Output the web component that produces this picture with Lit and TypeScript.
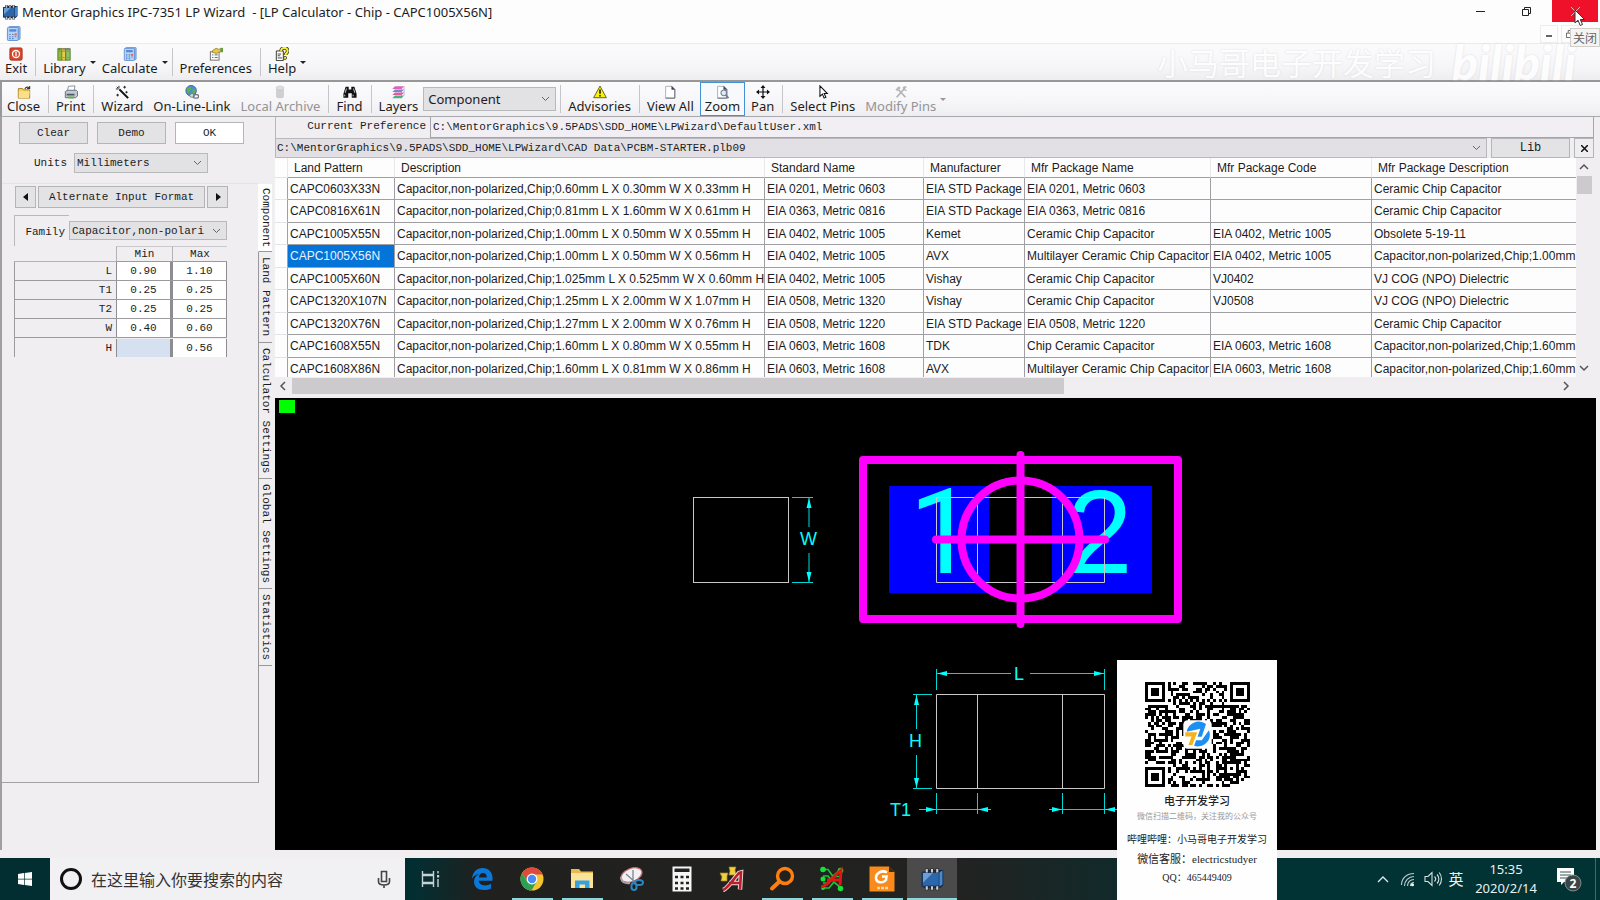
import { LitElement, html, css, svg, nothing } from "lit";
import { customElement } from "lit/decorators.js";
import { classMap } from "lit/directives/class-map.js";

type Tool = {
  label: string;
  icon: unknown;
  arrow?: boolean;
  disabled?: boolean;
  active?: boolean;
  sep?: boolean;
};

const icon = (body: unknown, size = 14) =>
  html`<svg class="ico" width=${size} height=${size} viewBox="0 0 16 16" aria-hidden="true">${body}</svg>`;

const calculatorGlyph = svg`
  <rect x="3" y="0.5" width="12" height="14" rx="1" fill="#8fb6ee" stroke="#6f97d4"/>
  <rect x="1.500" y="1.500" width="11.500" height="14" rx="1" fill="#b4d3f8" stroke="#5f8dd2"/>
  <rect x="3.500" y="3.500" width="7.500" height="2.500" fill="#5a86d0"/>
  <path d="M3.500 9h1.500M6.500 9h1.500M3.500 11.500h1.500M6.500 11.500h1.500M9.500 11.500h1.500M3.500 13.500h1.500M6.500 13.500h1.500" stroke="#4f7cc4" stroke-width="1.200"/>
  <rect x="9" y="8" width="2.500" height="2" fill="#e2643c"/>`;

const pageGlyph = svg`
  <path d="M3 1.500h7l3.500 3.500v10H3z" fill="#fff" stroke="#a3aab4"/>
  <path d="M10 1.500v3.500h3.500z" fill="#3d434c" stroke="#3d434c" stroke-width=".6"/>
  <path d="M13.500 5v10H3" fill="none" stroke="#5d6570"/>`;

const chipGlyph = svg`
  <path d="M2.500 3.500 4 2h11.500v10L13.500 14h-11z" fill="#12253c"/>
  <rect x="1.500" y="3.500" width="11.500" height="9.500" fill="#2c66ab" stroke="#17365f"/>
  <path d="M2 4h6.500L2 10.500z" fill="#7fb2e6" opacity=".75"/>
  <path d="M13 3.500 15 2.300v9.400L13 13z" fill="#4a88cc"/>
  <path d="M4.500 1v3M8 1v3M11.500 1v3M4.500 12.500v3M8 12.500v3M11.500 12.500v3" stroke="#20262e" stroke-width="2.400"/>
  <path d="M4.500 1.300v2.400M8 1.300v2.400M11.500 1.300v2.400M4.500 12.800v2.400M8 12.800v2.400M11.500 12.800v2.400" stroke="#c9ced6" stroke-width="1.400"/>`;

const mainTools: Tool[] = [
  {
    label: "Exit",
    sep: true,
    icon: icon(svg`<rect x="1" y="1" width="14" height="14" rx="1.500" fill="#d8472b" stroke="#a93019"/>
      <circle cx="8" cy="8" r="4" fill="none" stroke="#fff" stroke-width="1.500"/><path d="M8 5.500v5" stroke="#fff" stroke-width="1.500"/>`),
  },
  {
    label: "Library",
    arrow: true,
    icon: icon(svg`<rect x="1" y="2" width="4.500" height="13" fill="#8fbf3c" stroke="#4e7420"/><rect x="5.500" y="2" width="4.500" height="13" fill="#e6d04a" stroke="#8d7a1c"/>
      <rect x="10" y="2" width="5" height="13" fill="#8fbf6a" stroke="#4e7420"/><path d="M1 5h14M1 12h14" stroke="#8a88b0"/><path d="M3 1v3M8 1v3M12.500 1v3" stroke="#7c5ba8"/>`),
  },
  { label: "Calculate", arrow: true, sep: true, icon: icon(calculatorGlyph) },
  {
    label: "Preferences",
    sep: true,
    icon: icon(svg`<rect x="1.500" y="5.500" width="10" height="9.500" fill="#fbfbf6" stroke="#5c6268"/><path d="M3.500 9h1.500M6.500 9h3.500M3.500 12h1.500M6.500 12h3.500" stroke="#4e5a66"/>
      <path d="M4 4 8 1.500l3 1 4-.5v3l-4 1-2.500 1.500L4 6z" fill="#e8c64a" stroke="#8a7420" stroke-width=".8"/><rect x="13" y="1" width="3" height="5" fill="#6a9a3e"/>`),
  },
  {
    label: "Help",
    arrow: true,
    icon: icon(svg`<path d="M1.500 4.500h8v11h-8z" fill="#fff" stroke="#222"/><path d="M3 8h4M3 10h3M3 12.500h5" stroke="#333"/>
      <path d="M7 4.500C7 0 14.500 0 14.500 4.500 14.500 7 12 7 12 9" fill="none" stroke="#222" stroke-width="4"/><path d="M7 4.500C7 0 14.500 0 14.500 4.500 14.500 7 12 7 12 9" fill="none" stroke="#f6ee2c" stroke-width="2.400"/>
      <circle cx="11.500" cy="12.500" r="1.800" fill="#f6ee2c" stroke="#222" stroke-width=".8"/>`),
  },
];

const viewToolsLeft: Tool[] = [
  {
    label: "Close",
    sep: true,
    icon: icon(svg`<path d="M1.500 4h5l1 1.500h7V15h-13z" fill="#f3cf62" stroke="#a57a1e"/><path d="M2 7h12.500l-1 8H2z" fill="#fbe08a"/><path d="M9 4.500c1-2 3-2.500 5-1.500M14.500 1v3h-3" fill="none" stroke="#333" stroke-width="1.200"/>`),
  },
  {
    label: "Print",
    sep: true,
    icon: icon(svg`<path d="M5 1.500 12.500 1 11.500 7H4z" fill="#fff" stroke="#7c8794"/><path d="M1.500 7.500 4 6h10l1.500 1.500v5L13 14.500H1.500z" fill="#c3c8d2" stroke="#5c6674"/><path d="M3 10h9v2H3z" fill="#4e5866"/><path d="M4 13h8l-1 2.500H5z" fill="#66b04e"/>`),
  },
  {
    label: "Wizard",
    icon: icon(svg`<path d="M5 5 15 15" stroke="#111" stroke-width="2.400"/><path d="M4.500 1v3M1 4.500h3M2 2l1.500 1.500M11 1v3M9.500 2.500h3M3 10v3M1.500 11.500h3M13 7v2.500M12 8.300h2.500" stroke="#222" stroke-width="1.100"/>`),
  },
  {
    label: "On-Line-Link",
    icon: icon(svg`<circle cx="7" cy="6.500" r="6" fill="#4c8fd0" stroke="#2f5f9a"/><path d="M3 3c2-1.500 4-1 4 1S5 6 5 8 3 9 2 7s0-3 1-4zM9 5c2-1 3.500 0 3.500 2S10 10 9 9 8 6 9 5z" fill="#5db04c"/>
      <rect x="5.500" y="10" width="5.500" height="4" rx="2" fill="#d9dde4" stroke="#6c7683"/><rect x="9.500" y="11" width="6" height="4" rx="2" fill="none" stroke="#6c7683" stroke-width="1.400"/>`),
  },
  {
    label: "Local Archive",
    disabled: true,
    sep: true,
    icon: icon(svg`<path d="M3.500 3.500v9.500c0 3 9 3 9 0V3.500z" fill="#cfcfcf"/><ellipse cx="8" cy="3.300" rx="4.500" ry="2.200" fill="#dedede" stroke="#c3c3c3" stroke-width=".6"/>`),
  },
  {
    label: "Find",
    sep: true,
    icon: icon(svg`<path d="M3 2h3.500v3H9.500V2H13l2.500 8v4.500H10v-5H6v5H.5V10z" fill="#111"/><path d="M4 4 2.500 9M12 4l1.500 5M2 11v2M11.500 11v2" stroke="#f2f2f2" stroke-width=".9"/>`),
  },
  {
    label: "Layers",
    icon: icon(svg`<path d="M4.500 1.500H15l-3 3H1.500z" fill="#d766b4"/><path d="M4.500 5H15l-3 3H1.500z" fill="#7d82d8"/><path d="M4.500 8.500H15l-3 3H1.500z" fill="#e05ca0"/><path d="M4.500 12H15l-3 3H1.500z" fill="#4fae86"/>
      <path d="M15 1.500v10.500M12 4.500v10.500" stroke="#8a86b0" stroke-width=".6"/>`),
  },
];

const viewToolsRight: Tool[] = [
  {
    label: "Advisories",
    sep: true,
    icon: icon(svg`<path d="M8 1.200 15.300 14.500H.7z" fill="#f8f010" stroke="#55520a" stroke-linejoin="round"/><path d="M8 5v5M8 11.500v1.500" stroke="#111" stroke-width="1.700"/>`),
  },
  { label: "View All", icon: icon(pageGlyph) },
  {
    label: "Zoom",
    active: true,
    icon: icon(svg`${pageGlyph}<circle cx="10" cy="9" r="3.200" fill="#dcecf8" stroke="#6f7f92" stroke-width="1.200"/><path d="m12.300 11.300 3 3.700" stroke="#6f7f92" stroke-width="2"/>`),
  },
  {
    label: "Pan",
    sep: true,
    icon: icon(svg`<path d="M8 2v12M2 8h12" stroke="#111" stroke-width="1.400"/><path d="m8 0 2.800 3.500H5.200zM8 16l2.800-3.500H5.200zM0 8l3.500-2.800v5.600zM16 8l-3.500-2.800v5.600z" fill="#111"/>`),
  },
  {
    label: "Select Pins",
    icon: icon(svg`<path d="M4.500 1v12l2.800-2.600L9.300 15l2-.9-2-4.300H13z" fill="#fff" stroke="#111" stroke-width="1.200"/>`),
  },
  {
    label: "Modify Pins",
    disabled: true,
    arrow: true,
    icon: icon(svg`<path d="m3 14 9-10M4 4l9 10" stroke="#b4b4b4" stroke-width="2"/><path d="M1.500 5.500 5 1.500l3 1.500-4 4z" fill="#bdbdbd"/><path d="M10 2.500c2-2 4-1 5 0l-2 .5v2l2 1c-2 1.500-5 0-5-3.500z" fill="#b4b4b4"/>`),
  },
];

const columns = ["Land Pattern", "Description", "Standard Name", "Manufacturer", "Mfr Package Name", "Mfr Package Code", "Mfr Package Description"];

const chip = "Capacitor,non-polarized,Chip;";
const rows: string[][] = [
  ["CAPC0603X33N", chip + "0.60mm L X 0.30mm W X 0.33mm H", "EIA 0201, Metric 0603", "EIA STD Package", "EIA 0201, Metric 0603", "", "Ceramic Chip Capacitor"],
  ["CAPC0816X61N", chip + "0.81mm L X 1.60mm W X 0.61mm H", "EIA 0363, Metric 0816", "EIA STD Package", "EIA 0363, Metric 0816", "", "Ceramic Chip Capacitor"],
  ["CAPC1005X55N", chip + "1.00mm L X 0.50mm W X 0.55mm H", "EIA 0402, Metric 1005", "Kemet", "Ceramic Chip Capacitor", "EIA 0402, Metric 1005", "Obsolete 5-19-11"],
  ["CAPC1005X56N", chip + "1.00mm L X 0.50mm W X 0.56mm H", "EIA 0402, Metric 1005", "AVX", "Multilayer Ceramic Chip Capacitor", "EIA 0402, Metric 1005", chip + "1.00mm"],
  ["CAPC1005X60N", chip + "1.025mm L X 0.525mm W X 0.60mm H", "EIA 0402, Metric 1005", "Vishay", "Ceramic Chip Capacitor", "VJ0402", "VJ COG (NPO) Dielectric"],
  ["CAPC1320X107N", chip + "1.25mm L X 2.00mm W X 1.07mm H", "EIA 0508, Metric 1320", "Vishay", "Ceramic Chip Capacitor", "VJ0508", "VJ COG (NPO) Dielectric"],
  ["CAPC1320X76N", chip + "1.27mm L X 2.00mm W X 0.76mm H", "EIA 0508, Metric 1220", "EIA STD Package", "EIA 0508, Metric 1220", "", "Ceramic Chip Capacitor"],
  ["CAPC1608X55N", chip + "1.60mm L X 0.80mm W X 0.55mm H", "EIA 0603, Metric 1608", "TDK", "Chip Ceramic Capacitor", "EIA 0603, Metric 1608", chip + "1.60mm"],
  ["CAPC1608X86N", chip + "1.60mm L X 0.81mm W X 0.86mm H", "EIA 0603, Metric 1608", "AVX", "Multilayer Ceramic Chip Capacitor", "EIA 0603, Metric 1608", chip + "1.60mm"],
];

const dimensions = [
  { name: "L", min: "0.90", max: "1.10" },
  { name: "T1", min: "0.25", max: "0.25" },
  { name: "T2", min: "0.25", max: "0.25" },
  { name: "W", min: "0.40", max: "0.60" },
  { name: "H", min: "", max: "0.56" },
];

const sideTabs = ["Component", "Land Pattern", "Calculator Settings", "Global Settings", "Statistics"];

/** Builds the dark modules of a 37 x 37 code as one path. */
function codePath(): string {
  const n = 37;
  let seed = 465449;
  const next = () => {
    seed = (seed * 1103515245 + 12345) % 2147483648;
    return seed / 2147483648;
  };
  const ring = (x: number, y: number, cx: number, cy: number) => Math.max(Math.abs(x - cx), Math.abs(y - cy));
  let d = "";
  for (let y = 0; y < n; y++) {
    for (let x = 0; x < n; x++) {
      let dark = next() > 0.5;
      if (x === 6 || y === 6) dark = (x + y) % 2 === 0;
      for (const [cx, cy] of [[3, 3], [n - 4, 3], [3, n - 4]]) {
        const r = ring(x, y, cx, cy);
        if (r <= 4) dark = r <= 1 || r === 3;
      }
      const a = ring(x, y, 30, 30);
      if (a <= 2) dark = a !== 1;
      if (ring(x, y, 18, 18) <= 4) dark = false;
      if (dark) d += `M${x} ${y}h1v1h-1z`;
    }
  }
  return d;
}

const arrowHead = (x: number, y: number, dir: "l" | "r" | "u" | "d") => {
  const turn = { r: 0, d: 90, l: 180, u: 270 }[dir];
  return svg`<path d="M0 0-10-2.500v5z" transform="translate(${x} ${y}) rotate(${turn})" fill="#00ffff"/>`;
};

type App = { label: string; glyph: unknown; running?: boolean; active?: boolean };
const glyph = (body: unknown) => html`<svg width="26" height="26" viewBox="0 0 26 26" aria-hidden="true">${body}</svg>`;

const apps: App[] = [
  { label: "Edge", glyph: glyph(svg`<path d="M3 12.500C4 5.500 8 2 13.500 2 20 2 23.500 6.500 23.500 12v2.800H9.800c.2 3 3 4.600 6.200 4.600 2.300 0 4.300-.6 6-1.600v4.700C20 23.600 17.500 24 15 24 8.500 24 5 20.500 5 15.500c0-3.500 2-6 5-7.400-3 .4-5.500 2-7 4.400zM9.900 11.400h7.900C17.800 8.600 16.500 7 14 7c-2.400 0-3.700 1.800-4.100 4.400z" fill="#0b78d8"/>`) },
  { label: "Chrome", running: true, glyph: glyph(svg`<circle cx="13" cy="13" r="11.500" fill="#f4c430"/><path d="m3 7.200 8 13.600 1.500 3.700A11.500 11.500 0 0 1 3 7.200z" fill="#2aa055"/><path d="M3 7.200 8.500 16l4 8.500L17 16.500 13 13z" fill="#2aa055"/><path d="M3 7.200A11.500 11.500 0 0 1 23.600 8.500H13L8.500 14z" fill="#dd4b3e"/><circle cx="13" cy="13" r="5.400" fill="#fff"/><circle cx="13" cy="13" r="4.200" fill="#4a8af4"/>`) },
  { label: "File Explorer", running: true, glyph: glyph(svg`<path d="M2 3h8l2 2.500h12V22H2z" fill="#e9b94e"/><path d="M2 7h22v15H2z" fill="#fbe39a"/><path d="M6 22v-7.500h14.500V22H16v-3.500h-5.500V22z" fill="#35a2df"/>`) },
  { label: "Snipping Tool", glyph: glyph(svg`<ellipse cx="12.500" cy="9" rx="11" ry="6.500" transform="rotate(-22 12.500 9)" fill="#f2f0f2" stroke="#c66b73" stroke-width="1.200"/><path d="M2 11c0 5 4 7 9 6" stroke="#a7a3a8" stroke-width="2" fill="none"/><path d="m7 8 9 8M14 4v12" stroke="#7d858c" stroke-width="1.300"/><ellipse cx="20" cy="16.500" rx="4" ry="2.600" fill="none" stroke="#2b87bf" stroke-width="2"/><ellipse cx="15" cy="20.500" rx="2.600" ry="3.600" fill="none" stroke="#2b87bf" stroke-width="2"/>`) },
  { label: "Calculator", glyph: glyph(svg`<path d="M3.500.5h19v25h-19z" fill="#f6f6f6"/><path d="M5.500 2.500h15V6h-15z" fill="#222"/><path d="M6 11h3M11.500 11h3M17 11h3M6 17h3M11.500 17h3M17 17h3M6 22.500h3M11.500 22.500h3M17 22.500h3" stroke="#222" stroke-width="2.600"/>`) },
  { label: "Pads Layout", glyph: glyph(svg`<path d="M10 1h7l-1 3 1 5h-7l1-4zM1 7h8l-1 3v5H2l1-4z" fill="#f0cf45" stroke="#a28316" stroke-width=".7"/><path d="M4 24c4-1 9-9 16-17l2-.5-1 17M10 17h12" fill="none" stroke="#f2d7d7" stroke-width="4.500"/><path d="M4 24c4-1 9-9 16-17l2-.5-1 17M10 17h12" fill="none" stroke="#b81e2c" stroke-width="2.600"/>`) },
  { label: "Everything", running: true, glyph: glyph(svg`<circle cx="16" cy="10" r="7.500" fill="none" stroke="#ff7f0e" stroke-width="3.400"/><path d="m10.500 15.500-7.500 7" stroke="#ff7f0e" stroke-width="4" stroke-linecap="round"/>`) },
  { label: "Pads Router", running: true, glyph: glyph(svg`<path d="M4 3.500h5l5 7h8M4 10h5l4 5M4 17h6l4-7 7-6M4 22h6l5-6 7 6" fill="none" stroke="#12c832" stroke-width="1.700"/><g fill="#17e03a"><circle cx="4" cy="3.500" r="2.800"/><circle cx="4" cy="13" r="2.500"/><circle cx="21.500" cy="4.500" r="2.800"/><circle cx="21.500" cy="22.500" r="2.800"/><circle cx="4" cy="22" r="2"/></g><path d="M2 21c5 0 10-8 20-17l-1 15M8 14h14" fill="none" stroke="#e01616" stroke-width="3"/>`) },
  { label: "PDF", running: true, glyph: glyph(svg`<path d="M.5.500H20l5.500 5.500v19.500H.5z" fill="#f98a1c"/><path d="M20 .5v5.500h5.500z" fill="#3a2a18"/><path d="M18 6.500C13 3.500 6.500 7 7 12.500c.5 4.500 7 5 10 1.500l.5-3.500H13" fill="none" stroke="#fff" stroke-width="2.600"/><path d="M8 22h11" stroke="#fbd3a4" stroke-width="2.500" stroke-dasharray="3 1"/>`) },
  { label: "LP Wizard", running: true, active: true, glyph: html`<svg width="24" height="24" viewBox="0 0 16 16" aria-hidden="true">${chipGlyph}</svg>` },
];

@customElement("app-root")
export class AppRoot extends LitElement {
  static styles = css`
    :host {
      display: flex;
      flex-direction: column;
      height: 100vh;
      min-height: 700px;
      position: relative;
      overflow: hidden;
      background: #f0eef1;
      color: #1c1c1c;
      font: 13px/16px "Noto Sans", "Noto Sans CJK SC", sans-serif;
    }
    *, *::before, *::after { box-sizing: border-box; }
    button, input, select { font: inherit; color: inherit; margin: 0; padding: 0; border-radius: 0; }
    button { background: none; border: 0; white-space: nowrap; }
    select { appearance: none; }
    svg { display: block; flex: none; }

    .titlebar { display: flex; align-items: center; height: 24px; padding-left: 2px; background: #fdfdfe; flex: none; }
    .titlebar h1 { font: inherit; margin: 0 auto 0 4px; white-space: pre; }
    .win { width: 46px; height: 22px; align-self: flex-start; display: grid; place-items: center; }
    .win.close { background: #ef1029; margin: 0 2px 0 3px; }
    .menustrip { display: flex; align-items: center; justify-content: space-between; height: 20px; background: #fdfdfe; border-bottom: 1px solid #ebebed; padding-left: 6px; flex: none; }
    .mdi { display: flex; gap: 3px; padding-right: 21px; }
    .mdi button { width: 18px; height: 18px; border: 1px solid #ededf0; display: grid; place-items: center; }

    .toolbar { display: flex; align-items: center; flex: none; background: linear-gradient(#fcfbfc, #f6f5f8 60%, #eeeeef); }
    .toolbar.main { height: 38px; border-bottom: 2px solid #979797; }
    .toolbar.view { height: 35px; border-bottom: 1px solid #a9a8ac; border-left: 2px solid #98979a; }
    .tool { display: flex; flex-direction: column; align-items: center; height: 34px; padding: 2px 5px 0; border: 0; line-height: 14px; }
    .toolbar.view .tool { padding-top: 3px; }
    .tool.active { outline: 1px solid #4291d6; outline-offset: -1px; background: #f7f9fc; margin: 0 1px; }
    .tool.disabled { color: #949396; }
    .caret { width: 0; margin: 0 1px 0 -1px; border: 3px solid transparent; border-top-color: #222; border-bottom: 0; }
    .caret.disabled { border-top-color: #999; }
    .sep { width: 1px; height: 28px; background: #c6c5c9; margin: 0 2px 0 3px; }
    .layer { width: 133px; height: 24px; padding-left: 4px; margin: 0 1px 0 0; }
    .combo {
      border: 1px solid #b9b8bc;
      background: #e2e1e4 url("data:image/svg+xml,%3Csvg xmlns='http://www.w3.org/2000/svg' width='9' height='6'%3E%3Cpath d='M1 1l3.500 3.500L8 1' fill='none' stroke='%23666'/%3E%3C/svg%3E") no-repeat right 5px center;
    }

    .mono { font: 11px/14px "Liberation Mono", monospace; }
    .work { display: flex; flex: 1; min-height: 0; border-left: 2px solid #a19fa3; padding-right: 4px; margin-bottom: 8px; }
    .left { width: 256px; flex: none; display: flex; flex-direction: column; margin-bottom: 67px; border-bottom: 1px solid #a2a1a5; }
    .actions { display: grid; grid-template-columns: repeat(3, 69px); gap: 9px; padding: 5px 0 0 17px; }
    .btn { height: 22px; border: 1px solid #b5b4b8; background: #e3e2e5; }
    .btn.primary { background: #fff; }
    .units { display: flex; align-items: center; gap: 7px; padding: 9px 0 10px 32px; border-bottom: 1px solid #e4e3e6; }
    .units select { width: 134px; height: 20px; padding-left: 2px; }
    .pager { display: grid; grid-template-columns: 21px 1fr 21px; gap: 2px; width: 213px; margin: 2px 0 0 13px; }
    .pager .btn { display: grid; place-items: center; }
    .family { display: flex; align-items: center; width: 213px; margin: 7px 0 0 12px; }
    .family label { width: 55px; height: 31px; padding: 9px 4px 0 0; text-align: right; border: 1px solid #b9b8bc; border-width: 1px 0 0 1px; }
    .family select { flex: 1; min-width: 0; height: 19px; padding-left: 2px; }
    .dims { width: 213px; margin-left: 12px; border-collapse: separate; border-spacing: 0; table-layout: fixed; }
    .dims th, .dims td { padding: 0; height: 19px; font-weight: normal; border-bottom: 1px solid #9b9a9e; }
    .dims thead th { height: 16px; border-left: 1px solid #b3b2b6; border-top: 1px solid #c9c8cc; }
    .dims thead td { height: 16px; border-bottom: 1px solid #b3b2b6; }
    .dims tbody th { text-align: right; padding-right: 4px; border-left: 1px solid #9b9a9e; }
    .dims td input { display: block; width: 100%; height: 18px; border: 1px solid #8d8c90; border-width: 0 2px 0 1px; background: #fff; text-align: center; }
    .dims tr td:last-child input { border-right-width: 1px; }
    .dims td input.blank { background: #d5e1f1; }
    .dims tbody tr:last-child > * { border-bottom: 0; }

    .tabs { width: 17px; flex: none; padding-top: 67px; display: flex; flex-direction: column; margin-bottom: 67px; align-items: flex-start; }
    .tabs::after { content: ""; flex: 1; width: 1px; background: #98979b; }
    .tab { writing-mode: vertical-rl; width: 14px; padding: 5px 0; text-align: left; border-left: 1px solid #98979b; border-bottom: 1px solid #98979b; line-height: 12px; }
    .tab.on { background: #fff; border-left-color: #fff; padding: 4px 0; }

    .right { flex: 1; min-width: 0; display: flex; flex-direction: column; }
    .pref { display: flex; height: 21px; margin-right: 2px; flex: none; }
    .pref label { width: 155px; padding: 2px 4px 0 0; text-align: right; border-left: 1px solid #b9b8bc; }
    .pref input { flex: 1; min-width: 0; padding-left: 2px; border: 1px solid #a5a4a8; border-top: 0; background: #f1eff4; outline: 0; }
    .lib { display: flex; height: 20px; gap: 4px; margin-right: 2px; flex: none; }
    .lib .combo { flex: 1; min-width: 0; background-color: #e2e0e4; padding-left: 1px; }
    .lib .btn { height: 20px; width: 79px; font-size: 12px; }
    .lib .btn.x { width: 20px; display: grid; place-items: center; background: #eeedf0; }

    .list { display: flex; height: 219px; flex: none; background: #fefdfe; }
    .listview { flex: 1; min-width: 0; overflow: hidden; }
    .grid { width: 100%; table-layout: fixed; border-collapse: separate; border-spacing: 0; font: 12px/16px "Liberation Sans", Arial, sans-serif; }
    .grid th, .grid td { padding: 0 0 0 2px; text-align: left; font-weight: normal; white-space: nowrap; overflow: hidden; border-right: 1px solid #a09fa3; border-bottom: 1px solid #a09fa3; }
    .grid thead th, .grid thead td { height: 20px; padding-left: 6px; border-right-color: #e8e7ea; }
    .grid tbody td { height: 22px; }
    .grid tbody tr:nth-child(even) td { height: 23px; }
    .grid .gut { border-bottom-color: #e3e2e5; padding: 0; }
    .grid .sel { background: #0474d8; color: #e8f2fc; }
    .grid tr > :last-child { border-right: 0; }
    .vbar { width: 20px; flex: none; display: flex; flex-direction: column; align-items: center; padding: 4px 4px 4px 0; background: #f0eef1; }
    .vbar .thumb { width: 15px; height: 18px; margin: 4px 0 auto; background: #cccacd; }
    .hbar { display: flex; align-items: center; height: 17px; flex: none; padding: 0 25px 0 3px; gap: 4px; }
    .hbar .track { flex: 1; height: 16px; }
    .hbar .thumb { width: 61%; height: 100%; background: #cccacd; }
    .stage { flex: 1; min-height: 0; background: #000; margin-top: 4px; overflow: hidden; }
    .stage svg { width: 100%; height: 100%; }
    .stage text { font-family: "Liberation Sans", Arial, sans-serif; fill: #00ffff; }
    .stage .one { font-family: Roboto, sans-serif; }

    .taskbar { display: flex; height: 42px; flex: none; color: #e9f0f0; background: linear-gradient(90deg, #032e31 0, #032e31 26%, #20201f 30%, #222221 60%, #013234 80%); }
    .start { width: 50px; display: grid; place-items: center; }
    .search { width: 355px; display: flex; align-items: center; gap: 8px; padding: 0 14px 0 9px; background: #f1f0f2; }
    .search input { flex: 1; min-width: 0; border: 0; background: none; outline: 0; color: #333; font: 16px/24px "Noto Sans CJK SC", sans-serif; }
    .search input::placeholder { color: #333; opacity: 1; }
    .app { width: 50px; display: grid; place-items: center; position: relative; }
    .app.view { width: 52px; }
    .app.run::after { content: ""; position: absolute; left: 5px; right: 4px; bottom: 0; height: 2px; background: #8fd6dc; }
    .app.now { background: #4b4b4b; }
    .app.now::after { left: 0; right: 0; }
    .tray { margin-left: auto; display: flex; align-items: center; padding-right: 4px; }
    .tray button { display: grid; place-items: center; }
    .net { width: 25px; }
    .ime { font: 15px/20px "Noto Sans CJK SC", sans-serif; width: 22px; }
    .clock { text-align: center; line-height: 19px; width: 78px; }
    .note { width: 48px; }
    .desk { width: 1px; height: 42px; background: #44696b; margin-left: 2px; }

    .card { position: absolute; right: 323px; bottom: 0; width: 160px; height: 240px; background: #fefefe; display: flex; flex-direction: column; align-items: center; padding-top: 22px; font: 10px/20px "Noto Sans CJK SC", sans-serif; color: #222; white-space: nowrap; z-index: 2; }
    .card p { margin: 0; }
    .card .name { margin-top: 3px; font-size: 11px; font-weight: 500; }
    .card .hint { font-size: 8px; line-height: 12px; color: #999; margin-bottom: 7px; }
    .card .id { font: 10px/18px "Liberation Serif", "Noto Sans CJK SC", serif; }
    .card .latin { font: 11px/20px "Liberation Serif", "Noto Sans CJK SC", serif; }
    .mark { position: absolute; top: 32px; right: 24px; display: flex; align-items: center; gap: 16px; font: 31px/60px "Noto Sans CJK SC", sans-serif; color: #fff; opacity: .8; text-shadow: 0 0 2px #d4d3d8; pointer-events: none; }
    .mark .logo { font: italic 900 48px/60px Lato, sans-serif; }
    .tip { position: absolute; top: 28px; right: 0; width: 30px; height: 19px; background: #f5f4f2; border: 1px solid #cfcec9; font: 12px/17px "Noto Sans CJK SC", sans-serif; color: #666; text-align: center; white-space: nowrap; z-index: 2; }
    .cursor { position: absolute; top: 9px; right: 12px; z-index: 3; }
  `;

  private tool(t: Tool) {
    const state = { disabled: !!t.disabled, active: !!t.active };
    return html`<button class=${classMap({ tool: true, ...state })} type="button" ?disabled=${t.disabled}>${t.icon}<span>${t.label}</span></button>
      ${t.arrow ? html`<span class=${classMap({ caret: true, disabled: !!t.disabled })}></span>` : nothing}
      ${t.sep ? html`<span class="sep"></span>` : nothing}`;
  }

  private chevron(d: string) {
    return html`<svg width="10" height="10" viewBox="0 0 10 10" aria-hidden="true"><path d=${d} fill="none" stroke="#555" stroke-width="1.500" /></svg>`;
  }

  private leftPanel() {
    return html`<form class="left mono" @submit=${(e: Event) => e.preventDefault()}>
      <div class="actions">
        <button class="btn" type="button">Clear</button>
        <button class="btn" type="button">Demo</button>
        <button class="btn primary" type="submit">OK</button>
      </div>
      <div class="units">
        <label for="units">Units</label>
        <select id="units" class="combo"><option>Millimeters</option></select>
      </div>
      <div class="pager">
        <button class="btn" type="button" aria-label="Previous format"><svg width="6" height="8" viewBox="0 0 6 8"><path d="M5 0v8L0 4z" fill="#111" /></svg></button>
        <button class="btn" type="button">Alternate Input Format</button>
        <button class="btn" type="button" aria-label="Next format"><svg width="6" height="8" viewBox="0 0 6 8"><path d="M1 0v8l5-4z" fill="#111" /></svg></button>
      </div>
      <div class="family">
        <label for="family">Family</label>
        <select id="family" class="combo"><option>Capacitor,non-polari</option></select>
      </div>
      <table class="dims">
        <colgroup><col /><col width="56" /><col width="55" /></colgroup>
        <thead><tr><td></td><th scope="col">Min</th><th scope="col">Max</th></tr></thead>
        <tbody>
          ${dimensions.map(
            (d) => html`<tr>
              <th scope="row">${d.name}</th>
              <td><input class=${d.min ? "" : "blank"} aria-label="${d.name} min" .value=${d.min} /></td>
              <td><input aria-label="${d.name} max" .value=${d.max} /></td>
            </tr>`
          )}
        </tbody>
      </table>
    </form>`;
  }

  private grid() {
    return html`<div class="list">
        <div class="listview">
          <table class="grid">
            <colgroup><col width="13" /><col width="107" /><col width="370" /><col width="159" /><col width="101" /><col width="186" /><col width="161" /><col /></colgroup>
            <thead><tr><td class="gut"></td>${columns.map((c) => html`<th scope="col">${c}</th>`)}</tr></thead>
            <tbody>
              ${rows.map(
                (r, i) => html`<tr><td class="gut"></td>${r.map((c, j) => html`<td class=${i === 3 && j === 0 ? "sel" : ""}>${c}</td>`)}</tr>`
              )}
            </tbody>
          </table>
        </div>
        <div class="vbar">${this.chevron("M1 7l4-4 4 4")}<span class="thumb"></span>${this.chevron("M1 3l4 4 4-4")}</div>
      </div>
      <div class="hbar">${this.chevron("M7 1L3 5l4 4")}<div class="track"><div class="thumb"></div></div>${this.chevron("M3 1l4 4-4 4")}</div>`;
  }

  private stage() {
    return html`<div class="stage">
      <svg viewBox="276 398 1320 452" preserveAspectRatio="xMaxYMax meet" role="img" aria-label="Land pattern preview">
        <rect x="279" y="400" width="16" height="13" fill="#00ff00" />
        <g fill="#0000ff"><rect x="889" y="486" width="100" height="107" /><rect x="1052" y="486" width="100" height="107" /></g>
        <text class="one" x="909" y="573" font-size="118">1</text>
        <text x="1067" y="573" font-size="118">2</text>
        <g fill="none" stroke="#c8c8c8">
          <rect x="693.500" y="497.500" width="95" height="85" />
          <path d="M936.500 497.500h168v85h-168zM977.500 497.500v85M1062.500 497.500v85" />
          <path d="M936.500 694.500h168v94h-168zM977.500 694.500v94M1062.500 694.500v94" />
        </g>
        <g fill="none" stroke="#ff00ff" stroke-width="8" stroke-linecap="round" stroke-linejoin="round">
          <rect x="863" y="460" width="315" height="159" />
          <circle cx="1020.500" cy="539.500" r="59" />
          <path d="M1020.500 455v169M936 539.500h169" />
        </g>
        <g fill="none" stroke="#00d8d8">
          <path d="M792 497.500h21M792 582.500h21M809 498v29M809 553v29" />
          <path d="M936.500 669v21M1104.500 669v21M937 673.500h74M1030 673.500h74" />
          <path d="M913 694.500h19M913 788.500h19M916.500 695v34M916.500 755v33" />
          <path d="M936.500 793v21M977.500 793v21M1062.500 793v21M1104.500 793v21M919 809.500h72M1049 809.500h72" />
        </g>
        ${arrowHead(809, 498, "u")}${arrowHead(809, 582, "d")}
        ${arrowHead(937, 673.5, "l")}${arrowHead(1104, 673.5, "r")}
        ${arrowHead(916.5, 695, "u")}${arrowHead(916.5, 788, "d")}
        ${arrowHead(936, 809.5, "r")}${arrowHead(978, 809.5, "l")}
        ${arrowHead(1062, 809.5, "r")}${arrowHead(1105, 809.5, "l")}
        <g font-size="18"><text x="800" y="545">W</text><text x="1014" y="680">L</text><text x="909" y="747">H</text><text x="890" y="816">T1</text></g>
      </svg>
    </div>`;
  }

  private taskbar() {
    return html`<nav class="taskbar">
      <button class="start" type="button" aria-label="Start"><svg width="14" height="14" viewBox="0 0 14 14"><path d="M0 2l6-1v5.700H0zM6.700.9 14 0v6.700H6.700zM0 7.400h6v5.700L0 12zM6.700 7.400H14V14l-7.300-1z" fill="#fff" /></svg></button>
      <div class="search">
        <svg width="24" height="24" viewBox="0 0 24 24" aria-hidden="true"><circle cx="12" cy="12" r="9.500" fill="none" stroke="#111" stroke-width="3" /></svg>
        <input aria-label="Search" placeholder="在这里输入你要搜索的内容" />
        <svg width="14" height="18" viewBox="0 0 14 18" aria-hidden="true"><path d="M4.500 1.500h5v10h-5zM1.500 8v3.500c0 3 2 3.500 5.500 3.500s5.500-.5 5.500-3.500V8M7 15v3" fill="none" stroke="#444" stroke-width="1.600" /></svg>
      </div>
      <button type="button" class="app view" aria-label="Task view">${glyph(svg`<path d="M4.500 5v3.500h11V5M4.500 21v-3.500h11V21M4.500 9.500h11v7h-11zM20 5v2.500M20 13v8" fill="none" stroke="#c3d2d4" stroke-width="1.400"/><rect x="19" y="9" width="2.200" height="2.500" fill="#c3d2d4"/>`)}</button>
      ${apps.map((a) => html`<button type="button" aria-label=${a.label} class=${classMap({ app: true, run: !!a.running, now: !!a.active })}>${a.glyph}</button>`)}
      <div class="tray">
        <button class="net" type="button" aria-label="Hidden icons"><svg width="12" height="8" viewBox="0 0 12 8"><path d="M1 7l5-5 5 5" fill="none" stroke="#dfe9e9" stroke-width="1.300" /></svg></button>
        <button class="net" type="button" aria-label="Network"><svg width="15" height="15" viewBox="0 0 15 15"><path d="M1.500 13C1.500 6 7 1.500 14 1.500M4.500 14c0-5 4-9.500 9.500-9.500M7.500 14c0-3.500 2.500-6.500 6.500-6.500M10.500 14c0-2 1.500-3.500 3.500-3.500" fill="none" stroke="#b9cccc" stroke-width="1.200" /><circle cx="12.500" cy="12.800" r="1.500" fill="#fff" /></svg></button>
        <button class="net" type="button" aria-label="Volume"><svg width="18" height="16" viewBox="0 0 18 16"><path d="M1 5.500h3l4-4v13l-4-4H1zM10.500 5.500c1.500 1.500 1.500 3.500 0 5M13 3.500c2.500 2.500 2.500 6.500 0 9M15.200 1.500c3 3.500 3 9.500 0 13" fill="none" stroke="#d6e2e2" stroke-width="1.100" /></svg></button>
        <button class="ime" type="button">英</button>
        <div class="clock"><div>15:35</div><div>2020/2/14</div></div>
        <button class="note" type="button" aria-label="2 notifications"><svg width="26" height="26" viewBox="0 0 26 26"><path d="M1 2h17v14H8l-3 3v-3H1z" fill="#fff" /><path d="M4 6h11M4 9h11M4 12h7" stroke="#3a5759" stroke-width="1.200" /><circle cx="17" cy="17" r="8" fill="#3c4546" stroke="#7d8b8c" /><text x="17" y="21.500" font-size="12" font-weight="bold" text-anchor="middle" fill="#fff">2</text></svg></button>
        <span class="desk"></span>
      </div>
    </nav>`;
  }

  private card() {
    return html`<aside class="card">
      <svg width="105" height="105" viewBox="0 0 37 37" shape-rendering="crispEdges" role="img" aria-label="QR code">
        <path d=${codePath()} fill="#000" />
        <g shape-rendering="auto" transform="translate(13.500 13.500)">
          <rect width="10" height="10" rx="1.500" fill="#fff" />
          <path d="M1.200 4A4.300 4.300 0 0 1 8 1.300L6.500 5.800H5L6 3z" fill="#1e8ff2" />
          <path d="M9 3.500C10.500 7 7 10 3.800 9L4.500 7h2z" fill="#1e8ff2" />
          <path d="M.7 4.200h4.200L3.200 8.700H1.800l1.100-3H.7z" fill="#f6b31c" />
        </g>
      </svg>
      <p class="name">电子开发学习</p>
      <p class="hint">微信扫描二维码，关注我的公众号</p>
      <p class="line">哔哩哔哩：小马哥电子开发学习</p>
      <p class="latin">微信客服：electricstudyer</p>
      <p class="id">QQ：465449409</p>
    </aside>`;
  }

  render() {
    return html`
      <header class="titlebar">
        <svg width="16" height="16" viewBox="0 0 16 16" aria-hidden="true">${chipGlyph}</svg>
        <h1>Mentor Graphics IPC-7351 LP Wizard  - [LP Calculator - Chip - CAPC1005X56N]</h1>
        <button class="win" type="button" aria-label="Minimize"><svg width="9" height="9"><path d="M0 4.500h9" stroke="#222" /></svg></button>
        <button class="win" type="button" aria-label="Restore"><svg width="9" height="9" viewBox="0 0 9 9"><path d="M.5 2.500h6v6h-6zM2.500 2.500v-2h6v6h-2" fill="none" stroke="#222" /></svg></button>
        <button class="win close" type="button" aria-label="Close"><svg width="9" height="9"><path d="M0 0l9 9M9 0L0 9" stroke="#f7b3ba" /></svg></button>
      </header>
      <div class="menustrip">
        ${icon(calculatorGlyph, 15)}
        <div class="mdi">
          <button type="button" aria-label="Minimize document"><svg width="6" height="8"><path d="M0 6h6" stroke="#333" stroke-width="1.500" /></svg></button>
          <button type="button" aria-label="Restore document"><svg width="8" height="8" viewBox="0 0 9 9"><path d="M.5 3.500h5v5h-5zM2.500 3v-2.500h5v5h-2" fill="none" stroke="#555" /></svg></button>
        </div>
      </div>
      <div class="toolbar main">${mainTools.map((t) => this.tool(t))}</div>
      <div class="toolbar view">
        ${viewToolsLeft.map((t) => this.tool(t))}
        <select class="combo layer" aria-label="Layer"><option>Component</option></select>
        <span class="sep"></span>
        ${viewToolsRight.map((t) => this.tool(t))}
      </div>
      <main class="work">
        ${this.leftPanel()}
        <div class="tabs" role="tablist">
          ${sideTabs.map((t, i) => html`<button type="button" role="tab" aria-selected=${i === 0} class=${classMap({ tab: true, mono: true, on: i === 0 })}>${t}</button>`)}
        </div>
        <section class="right">
          <div class="pref mono">
            <label for="pref">Current Preference</label>
            <input id="pref" readonly .value=${"C:\\MentorGraphics\\9.5PADS\\SDD_HOME\\LPWizard\\DefaultUser.xml"} />
          </div>
          <div class="lib mono">
            <select class="combo" aria-label="Library file"><option>${"C:\\MentorGraphics\\9.5PADS\\SDD_HOME\\LPWizard\\CAD Data\\PCBM-STARTER.plb09"}</option></select>
            <button class="btn" type="button">Lib</button>
            <button class="btn x" type="button" aria-label="Close library"><svg width="7" height="7"><path d="M0 0l7 7M7 0L0 7" stroke="#111" stroke-width="1.500" /></svg></button>
          </div>
          ${this.grid()}
          ${this.stage()}
        </section>
      </main>
      ${this.taskbar()}
      <div class="mark" aria-hidden="true"><span>小马哥电子开发学习</span><span class="logo">bilibili</span></div>
      <div class="tip" role="tooltip">关闭</div>
      ${this.card()}
      <svg class="cursor" width="14" height="18" viewBox="0 0 14 18" aria-hidden="true"><path d="M1 1v13l3-2.800L6.200 16.500l2.300-1L6.300 10.500h4.200z" fill="#fff" stroke="#333" /></svg>
    `;
  }
}
